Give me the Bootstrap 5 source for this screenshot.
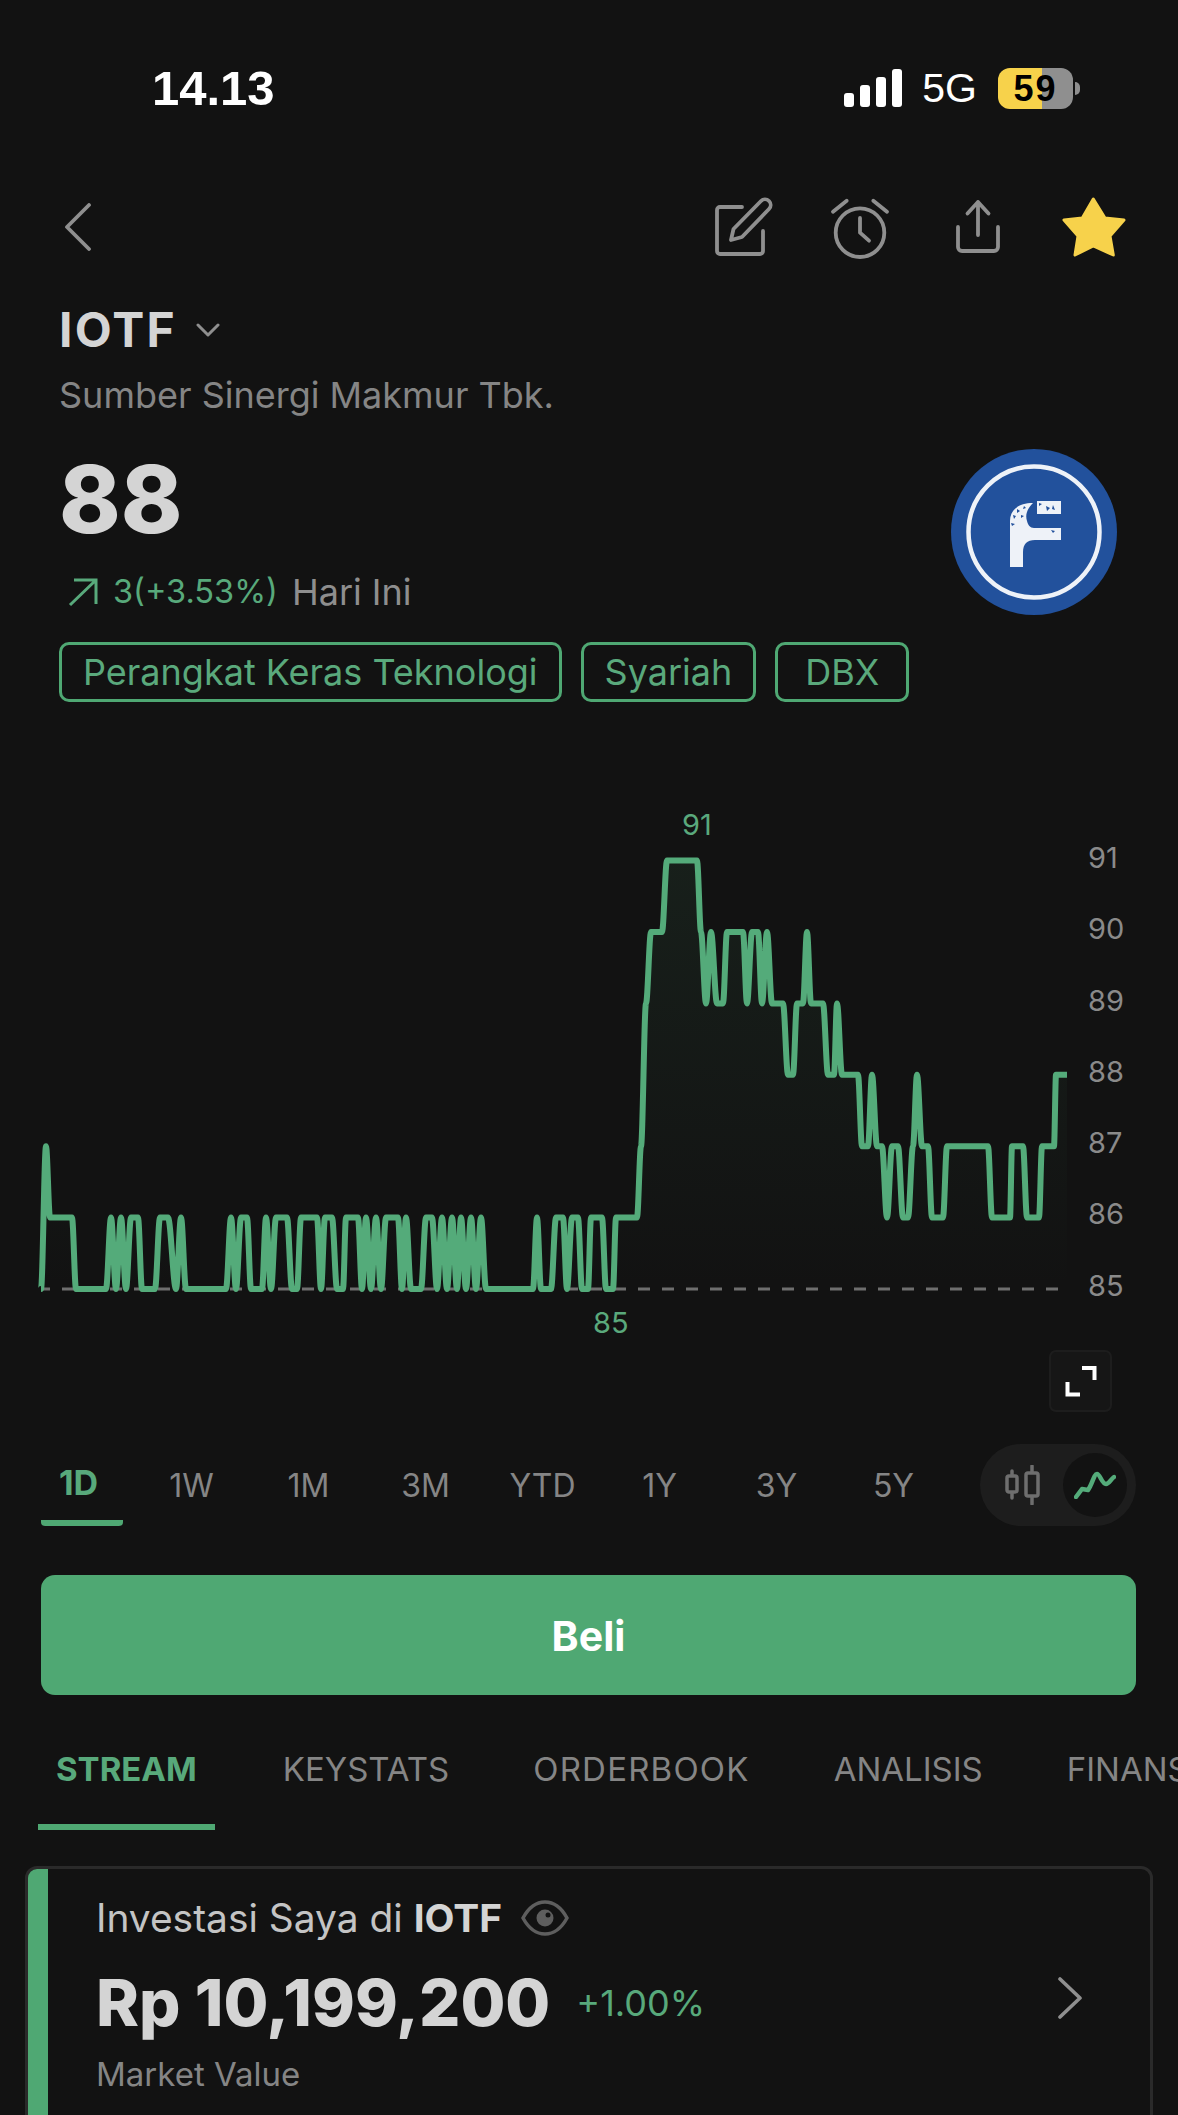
<!DOCTYPE html>
<html lang="id">
<head>
    <meta charset="UTF-8">
    <meta name="viewport" content="width=device-width, initial-scale=1.0">
    <title>IOTF</title>
    <link href="https://cdn.jsdelivr.net/npm/bootstrap@5.3.0/dist/css/bootstrap.min.css" rel="stylesheet">
    <style>
        html, body { background: #121212; }
        body { font-family: "Inter", "Liberation Sans", sans-serif; color: #8e8e8e; margin: 0; }
        .page-wrap { width: 1178px; height: 2115px; overflow: hidden; background: #121212; }

        .status-row { height: 176px; padding: 0 98px 0 152px; }
        .status-time { font: 700 49px/1 "Liberation Sans", sans-serif; color: #fff; }
        .status-net { font: 400 41px/1 "Liberation Sans", sans-serif; color: #fff; margin: 0 21px 0 19px; }
        .battery { width: 75px; height: 41px; border-radius: 12px; background: linear-gradient(90deg, #f7d24b 59%, #8f8f8f 59%); color: #000; font: 700 36px/41px "Liberation Sans", sans-serif; letter-spacing: 2px; text-align: center; }
        .battery-nub { width: 5px; height: 13px; background: #8f8f8f; border-radius: 0 5px 5px 0; margin-left: 2px; }

        .nav-row { height: 102px; padding: 0 52px 0 62px; }
        .nav-icons { gap: 58px; }
        .nav-icons svg { overflow: visible; display: block; }
        .ico-line { fill: none; stroke: #8f8f8f; stroke-width: 3.8; stroke-linecap: round; stroke-linejoin: round; }

        .stock-head { padding: 0 61px 0 59px; margin-top: 22px; }
        .stock-code { font-size: 48px; line-height: 60px; font-weight: 700; color: #d4d4d4; letter-spacing: 2.2px; }
        .code-chev { margin-left: 19px; }
        .stock-name { font-size: 36px; line-height: 46px; margin-top: 12px; color: #858585; }
        .stock-price { font-size: 93px; line-height: 100px; font-weight: 800; color: #d4d4d4; margin-top: 31px; }
        .stock-change { font-size: 36px; line-height: 46px; margin-top: 20px; }
        .chg-arrow { margin: 0 14px 0 8px; }
        .chg-num { font-size: 32.5px; color: #58a97b; margin-right: 14px; }
        .logo-mark { margin-top: 149px; }
        .tag-row { padding-left: 59px; gap: 19px; margin-top: 27px; }
        .stock-tag { height: 60px; padding: 0 21px; border: 3px solid #4fa873; border-radius: 10px; color: #5aa97c; font-size: 36px; line-height: 54px; }
        .tag-short { padding: 0 27px; }

        .chart-svg { display: block; margin-top: 97px; }
        .chart-svg text { font-family: "Inter", "Liberation Sans", sans-serif; font-size: 29px; }
        .expand-wrap { padding-right: 66px; margin-top: 6px; }
        .expand-btn { width: 63px; height: 62px; background: #161616; border: 2px solid #1d1d1d; border-radius: 7px; }

        .range-row { height: 82px; margin-top: 32px; padding: 0 42px 0 41px; }
        .range-item { width: 117px; font-size: 32px; color: #858585; text-align: center; line-height: 84px; }
        .range-on { width: 82px; margin-right: 10px; padding: 0 7px 0 0; color: #58a97b; font-weight: 700; font-size: 34px; line-height: 78px; border-bottom: 6px solid #4fa873; border-radius: 0 0 4px 4px; }
        .chart-toggle { width: 156px; height: 82px; border-radius: 41px; background: #1d1d1d; padding: 0 9px 0 25px; }
        .toggle-knob { width: 64px; height: 64px; border-radius: 50%; background: #121212; }

        .buy-btn { display: block; width: 1095px; height: 120px; margin: 49px 0 0 41px; padding: 10px 12px 6px; background: #4fa873; border: 0; border-radius: 14px; color: #fff; font-size: 41px; font-weight: 700; }
        .buy-btn:hover { background: #4fa873; color: #fff; }

        .tab-row { margin-top: 34px; padding-left: 38px; flex-wrap: nowrap; white-space: nowrap; overflow: hidden; }
        .tab-item { padding: 0 18px 15px; margin-right: 48px; font-size: 33px; line-height: 80px; color: #858585; border-bottom: 6px solid transparent; }
        .tab-on { color: #58a97b; font-weight: 700; border-bottom-color: #4fa873; margin-right: 50px; }
        .tab-wide { letter-spacing: 1.2px; }

        .invest-card { width: 1128px; height: 300px; margin: 36px 0 0 25px; background: #121212; border: 3px solid #2a2a2a; border-radius: 12px; overflow: hidden; }
        .invest-bar { width: 20px; background: #4fa873; flex: none; }
        .invest-body { padding: 19px 67px 0 48px; }
        .invest-title { font-size: 38.9px; line-height: 60px; color: #c4c4c4; }
        .invest-title b { font-weight: 700; color: #d4d4d4; }
        .eye-ico { margin-left: 19px; }
        .invest-value { font-size: 65px; line-height: 80px; font-weight: 800; color: #d4d4d4; margin-top: 15px; }
        .invest-pct { font-size: 36px; color: #58a97b; margin-left: 26px; }
        .invest-chev { margin-bottom: 10px; }
        .invest-note { font-size: 33px; line-height: 44px; margin-top: 9px; color: #858585; }
    </style>
</head>
<body>
<div class="page-wrap">
    <!-- status bar -->
    <div class="status-row d-flex align-items-center justify-content-between">
        <span class="status-time">14.13</span>
        <div class="d-flex align-items-center">
            <svg width="59" height="38" viewBox="0 0 59 38" fill="#fff">
                <rect x="0" y="24" width="10" height="14" rx="3"/>
                <rect x="16" y="16" width="10" height="22" rx="3"/>
                <rect x="32" y="8" width="10" height="30" rx="3"/>
                <rect x="48" y="0" width="10" height="38" rx="3"/>
            </svg>
            <span class="status-net">5G</span>
            <span class="battery">59</span>
            <span class="battery-nub"></span>
        </div>
    </div>

    <!-- back + actions -->
    <div class="nav-row d-flex align-items-center justify-content-between">
        <svg width="32" height="48" viewBox="0 0 32 48"><path class="ico-line" d="M27 2L5 24L27 46"/></svg>
        <div class="nav-icons d-flex">
            <svg width="60" height="66" viewBox="0 0 60 66">
                <path class="ico-line" d="M30 13H8a3 3 0 0 0-3 3V57a3 3 0 0 0 3 3H48a3 3 0 0 0 3-3V37"/>
                <path class="ico-line" d="M19 46l2.5-11L49 7a5.5 5.5 0 0 1 8 8L30 43Z"/>
            </svg>
            <svg width="60" height="66" viewBox="0 0 60 66">
                <circle class="ico-line" cx="30" cy="38.7" r="24.3"/>
                <path class="ico-line" d="M30 24V38.7L39 46.7M3 17.7L16.7 6.7M43.3 6.7L57 17.7"/>
            </svg>
            <svg width="60" height="66" viewBox="0 0 60 66">
                <path class="ico-line" d="M10 33V53a4 4 0 0 0 4 4H46a4 4 0 0 0 4-4V33M30 41V8M19.5 19.5L30 8L40.5 19.5"/>
            </svg>
            <svg width="60" height="66" viewBox="0 0 60 66">
                <path d="M27.3 5L39 24L58 26L44 42L47.3 61L27.3 52L9 61L12 42L-2 26L16.3 24Z" fill="#f7d24b" stroke="#f7d24b" stroke-width="3" stroke-linejoin="round"/>
            </svg>
        </div>
    </div>

    <!-- stock header -->
    <div class="stock-head d-flex justify-content-between align-items-start">
        <div>
            <div class="stock-code d-flex align-items-center">IOTF
                <svg class="code-chev" width="24" height="14" viewBox="0 0 24 14"><path d="M2 2L12 12L22 2" fill="none" stroke="#8f8f8f" stroke-width="3" stroke-linecap="round" stroke-linejoin="round"/></svg>
            </div>
            <div class="stock-name">Sumber Sinergi Makmur Tbk.</div>
            <div class="stock-price">88</div>
            <div class="stock-change d-flex align-items-center">
                <svg class="chg-arrow" width="32" height="30" viewBox="0 0 32 30"><path d="M3 28L29 3M7 3H29V27" fill="none" stroke="#58a97b" stroke-width="3"/></svg>
                <span class="chg-num">3(+3.53%)</span><span>Hari Ini</span>
            </div>
        </div>
        <svg class="logo-mark" width="166" height="166" viewBox="0 0 166 166">
            <circle cx="83" cy="83" r="83" fill="#22519c"/>
            <circle cx="83" cy="83" r="65.5" fill="none" stroke="#eef2f8" stroke-width="4.5"/>
            <path d="M59 118V72C59 62 66 54 82 54C76 60 74 66 76 72C77 76 79 79 83 79H110V91H84C76 91 72 95 72 103V118Z" fill="#eef2f8"/>
            <path d="M86 52H110V65H86Z" fill="#eef2f8"/>
            <path d="M62 66l3 1-2 3zM66 60l3 2-3 2zM70 66l3 1-3 2zM60 74l4 1-3 2zM73 57l2 2-3 1zM95 57l4 2-3 3zM102 56l2 5-3-1zM88 54l3 1-3 2zM100 81l4 1-2 2z" fill="#22519c"/>
        </svg>
    </div>
    <div class="tag-row d-flex">
        <span class="stock-tag">Perangkat Keras Teknologi</span>
        <span class="stock-tag">Syariah</span>
        <span class="stock-tag tag-short">DBX</span>
    </div>

    <!-- chart, drawn in page coordinates -->
    <svg class="chart-svg" width="1178" height="545" viewBox="0 800 1178 545">
        <defs>
            <linearGradient id="chartFade" gradientUnits="userSpaceOnUse" x1="0" y1="862" x2="0" y2="1290">
                <stop offset="0" stop-color="#4fa873" stop-opacity=".09"/>
                <stop offset="1" stop-color="#4fa873" stop-opacity="0"/>
            </linearGradient>
        </defs>
        <path id="chartArea" fill="url(#chartFade)"/>
        <line x1="41" y1="1290" x2="1065" y2="1290" stroke="#6e6e6e" stroke-width="3" stroke-dasharray="12 12" stroke-dashoffset="3"/>
        <path id="chartLine" fill="none" stroke="#54ab7a" stroke-width="6" stroke-linejoin="round"/>
        <g fill="#5aa97c">
            <text x="682" y="836">91</text>
            <text x="593" y="1334">85</text>
        </g>
        <g fill="#8a8a8a">
            <text x="1088" y="869">91</text>
            <text x="1088" y="940">90</text>
            <text x="1088" y="1012">89</text>
            <text x="1088" y="1083">88</text>
            <text x="1088" y="1154">87</text>
            <text x="1088" y="1225">86</text>
            <text x="1088" y="1297">85</text>
        </g>
    </svg>
    <div class="expand-wrap d-flex justify-content-end">
        <div class="expand-btn d-flex align-items-center justify-content-center">
            <svg width="32" height="32" viewBox="0 0 32 32"><path d="M17 3H29.5V15M2.5 17V29.5H15" fill="none" stroke="#fff" stroke-width="4"/></svg>
        </div>
    </div>

    <!-- range selector -->
    <div class="range-row d-flex">
        <span class="range-item range-on">1D</span>
        <span class="range-item">1W</span>
        <span class="range-item">1M</span>
        <span class="range-item">3M</span>
        <span class="range-item">YTD</span>
        <span class="range-item">1Y</span>
        <span class="range-item">3Y</span>
        <span class="range-item">5Y</span>
        <div class="chart-toggle d-flex align-items-center justify-content-between ms-auto">
            <svg width="36" height="40" viewBox="0 0 36 40" fill="none" stroke="#6e6e6e" stroke-width="3.5" stroke-linecap="round" stroke-linejoin="round">
                <path d="M7 6V33M27 1V39"/>
                <rect x="2" y="11" width="10" height="16" rx="2" fill="#1d1d1d"/>
                <rect x="21" y="8" width="12" height="23" rx="2" fill="#1d1d1d"/>
            </svg>
            <div class="toggle-knob d-flex align-items-center justify-content-center">
                <svg width="42" height="28" viewBox="0 0 42 28"><path d="M2 26L8 18L14 19C18 14 20 3 23 3C26 3 28 13 32 13C35 13 37 8 40 6" fill="none" stroke="#54ab7a" stroke-width="4.5" stroke-linecap="round" stroke-linejoin="round"/></svg>
            </div>
        </div>
    </div>

    <button type="button" class="btn buy-btn">Beli</button>

    <!-- tabs -->
    <div class="tab-row d-flex">
        <span class="tab-item tab-on">STREAM</span>
        <span class="tab-item">KEYSTATS</span>
        <span class="tab-item tab-wide">ORDERBOOK</span>
        <span class="tab-item">ANALISIS</span>
        <span class="tab-item">FINANSIAL</span>
    </div>

    <!-- portfolio card -->
    <div class="card invest-card flex-row">
        <div class="invest-bar"></div>
        <div class="invest-body flex-grow-1">
            <div class="invest-title d-flex align-items-center">
                <span>Investasi Saya di <b>IOTF</b></span>
                <svg class="eye-ico" width="48" height="36" viewBox="0 0 48 36"><path d="M2 18C8 7 16 2 24 2C32 2 40 7 46 18C40 29 32 34 24 34C16 34 8 29 2 18Z" fill="none" stroke="#5e5e5e" stroke-width="3.5"/><circle cx="24" cy="18" r="8.5" fill="#5e5e5e"/><circle cx="27" cy="15" r="2.5" fill="#121212"/></svg>
            </div>
            <div class="invest-value d-flex align-items-center justify-content-between">
                <span class="d-flex align-items-center">Rp 10,199,200<span class="invest-pct fw-normal">+1.00%</span></span>
                <svg class="invest-chev" width="26" height="42" viewBox="0 0 26 42"><path d="M3 2L23 21L3 40" fill="none" stroke="#8f8f8f" stroke-width="3.6" stroke-linecap="round" stroke-linejoin="round"/></svg>
            </div>
            <div class="invest-note">Market Value</div>
        </div>
    </div>
</div>

<script src="https://cdn.jsdelivr.net/npm/bootstrap@5.3.0/dist/js/bootstrap.bundle.min.js"></script>
<script>
    // [x, price] pairs read off the intraday line
    const ticks = [
        [41,85],[46,87],[50,86],[72,86],[76,85],[106,85],[111,86],[116,85],[121,86],[126,85],[131,86],[138,86],[142,85],[155,85],
        [160,86],[168,86],[176,85],[181,86],[186,85],[226,85],[231,86],[236,85],[241,86],[247,86],[251,85],[262,85],[266,86],[271,85],
        [276,86],[287,86],[292,85],[297,85],[301,86],[317,86],[321,85],[325,86],[332,86],[337,85],[343,85],[346,86],[358,86],[362,85],
        [366,86],[371,85],[376,86],[381,85],[386,86],[398,86],[402,85],[406,86],[411,85],[421,85],[426,86],[432,86],[437,85],[442,86],
        [447,85],[452,86],[457,85],[461,86],[466,85],[471,86],[476,85],[481,86],[486,85],[533,85],[537,86],[541,85],[551,85],[556,86],
        [563,86],[567,85],[572,86],[578,86],[582,85],[588,85],[591,86],[602,86],[606,85],[613,85],[616,86],[637,86],[641,87],[646,89],
        [651,90],[662,90],[667,91],[697,91],[701,90],[706,89],[711,90],[717,89],[723,89],[727,90],[743,90],[747,89],[752,90],[758,90],
        [762,89],[767,90],[772,89],[783,89],[788,88],[793,88],[797,89],[803,89],[807,90],[811,89],[823,89],[828,88],[834,88],[837,89],
        [842,88],[858,88],[862,87],[868,87],[872,88],[877,87],[882,87],[887,86],[892,87],[898,87],[903,86],[908,86],[913,87],[917,88],
        [922,87],[928,87],[932,86],[943,86],[947,87],[988,87],[992,86],[1010,86],[1012,87],[1023,87],[1027,86],[1039,86],[1042,87],
        [1054,87],[1056,88],[1067,88]
    ];
    const priceY = p => 1290 - (p - 85) * 71.4;

    let d = `M${ticks[0][0]} ${priceY(ticks[0][1])}`;
    for (let i = 1; i < ticks.length; i++) {
        const [x0, p0] = ticks[i - 1];
        const [x1, p1] = ticks[i];
        const k = (x1 - x0) * 0.35;
        d += `C${x0 + k} ${priceY(p0)} ${x1 - k} ${priceY(p1)} ${x1} ${priceY(p1)}`;
    }
    document.getElementById('chartLine').setAttribute('d', d);
    document.getElementById('chartArea').setAttribute('d', `${d}V1290H41Z`);
</script>
</body>
</html>
